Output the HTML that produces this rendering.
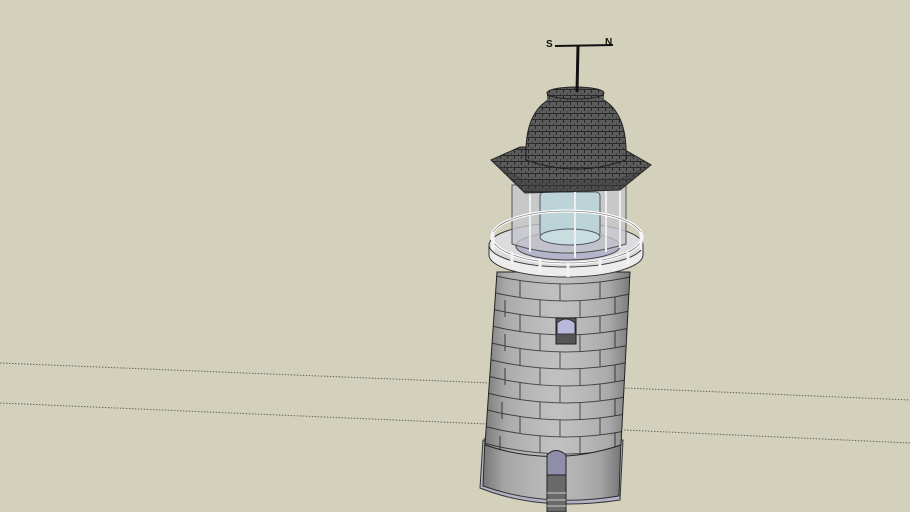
<!DOCTYPE html>
<html><head><meta charset="utf-8"><style>
html,body{margin:0;padding:0;background:#d3d1bb;}
svg{display:block}
</style></head><body>
<svg width="910" height="512" viewBox="0 0 910 512" xmlns="http://www.w3.org/2000/svg">
<defs>
<pattern id="shingle" width="7" height="6" patternUnits="userSpaceOnUse">
<rect width="7" height="6" fill="#5c5c5c"/>
<path d="M0 5.5H7M3.5 0V3M0 3V5.5" stroke="#2a2a2a" stroke-width="1.1"/>
</pattern>
<linearGradient id="shade" x1="0" x2="1">
<stop offset="0" stop-color="#000" stop-opacity="0.35"/>
<stop offset="0.15" stop-color="#000" stop-opacity="0.1"/>
<stop offset="0.5" stop-color="#fff" stop-opacity="0.05"/>
<stop offset="0.85" stop-color="#000" stop-opacity="0.1"/>
<stop offset="1" stop-color="#000" stop-opacity="0.35"/>
</linearGradient>
<clipPath id="tw"><path d="M497 272 L485 445 Q552 468 621 445 L630 272 Z"/></clipPath>
</defs>
<path d="M0 363L491 383M625 388L910 400M0 403L487 424M624 430L910 443" stroke="#666" stroke-width="1" stroke-dasharray="1.5 1.5" fill="none"/>
<!-- base -->
<path d="M483 440 L480 488 Q540 512 620 500 L623 440 Z" fill="#b2b2c4" stroke="#333"/>
<path d="M485 438 L483 486 Q545 508 619 496 L621 438 Z" fill="#b6b6b6" stroke="#333"/>
<path d="M485 438 L483 486 Q545 508 619 496 L621 438 Z" fill="url(#shade)"/>
<!-- tower body -->
<path d="M497 272 L485 445 Q552 468 621 445 L630 272 Z" fill="#bdbdbd"/>
<g clip-path="url(#tw)" stroke="#444" stroke-width="1" fill="none">
<path d="M480 272Q566 296 650 272M480 289Q566 313 650 289M480 306Q566 330 650 306M480 323Q566 347 650 323M480 340Q566 364 650 340M480 357Q566 381 650 357M480 374Q566 398 650 374M480 391Q566 415 650 391M480 408Q566 432 650 408M480 425Q566 449 650 425M480 442Q566 466 650 442"/>
<path d="M520 280v17M560 284v17M600 282v17M540 300v17M580 301v17M615 297v17M520 314v17M560 318v17M600 316v17M540 334v17M580 335v17M615 331v17M520 348v17M560 352v17M600 350v17M540 368v17M580 369v17M615 365v17M520 382v17M560 386v17M600 384v17M540 402v17M580 403v17M615 399v17M520 416v17M560 420v17M600 418v17M540 436v17M580 437v17M615 433v17M505 300v17M505 334v17M505 368v17M502 402v17M500 436v17"/>
</g>
<path d="M497 272 L485 445 Q552 468 621 445 L630 272 Z" fill="url(#shade)" stroke="#222"/>
<!-- upper window -->
<rect x="556" y="318" width="20" height="26" fill="#555" stroke="#222"/>
<path d="M557 334 V323 Q566 315 575 323 V334 Z" fill="#b8b8dc" stroke="#333"/>
<!-- door -->
<path d="M547 512 V455 Q556 446 566 455 V512 Z" fill="#8e8ea8" stroke="#222"/>
<rect x="547" y="475" width="19" height="37" fill="#6a6a6a" stroke="#222"/>
<path d="M547 493H566M547 500H566M547 506H566" stroke="#ccc"/>
<!-- gallery deck band -->
<path d="M489 245 V255 A77 22 0 0 0 643 255 V245 Z" fill="#ececec" stroke="#333"/>
<ellipse cx="566" cy="245" rx="77" ry="22" fill="#dcdcdf" stroke="#333"/>
<ellipse cx="568" cy="246" rx="52" ry="14" fill="#b4b4cc" stroke="#444"/>
<!-- lantern glass -->
<path d="M512 185 L512 244 Q566 262 626 244 L626 185 Z" fill="#c4c6cc" fill-opacity="0.8" stroke="#555"/>
<rect x="540" y="192" width="60" height="45" rx="4" fill="#bcd3d8" stroke="#556"/>
<ellipse cx="570" cy="237" rx="30" ry="8" fill="#c8dde0" stroke="#556"/>
<path d="M530 190V252M575 190V258M606 188V252M620 188V248" stroke="#eee" stroke-width="2"/>
<!-- railing -->
<ellipse cx="567" cy="237" rx="75" ry="26" fill="none" stroke="#fff" stroke-width="3"/>
<ellipse cx="567" cy="237" rx="75" ry="26" fill="none" stroke="#555" stroke-width="0.6"/>
<path d="M493 232V250M512 252V264M540 259V272M568 263V277M600 259V272M628 252V264M641 232V250" stroke="#f4f4f4" stroke-width="3"/>
<!-- roof hexagon -->
<path d="M491 160 L520 147 L620 147 L651 165 L620 190 L525 193 Z" fill="url(#shingle)" stroke="#222"/>
<path d="M491 160 L525 180 L620 178 L651 165 L620 190 L525 193 Z" fill="#3a3a3a" fill-opacity="0.45"/>
<!-- dome -->
<path d="M526 160 Q524 115 548 100 L604 100 Q628 115 626 160 Q576 178 526 160 Z" fill="url(#shingle)" stroke="#222"/>
<rect x="547" y="93" width="57" height="12" fill="url(#shingle)"/>
<ellipse cx="575.5" cy="93" rx="28.5" ry="6" fill="url(#shingle)" stroke="#222"/>
<path d="M577 92 L578 46" stroke="#111" stroke-width="3"/>
<path d="M555 46 L613 45" stroke="#111" stroke-width="2"/>
<text x="546" y="47" font-family="Liberation Sans, sans-serif" font-size="10" font-weight="bold" fill="#111">S</text>
<text x="605" y="45" font-family="Liberation Sans, sans-serif" font-size="10" font-weight="bold" fill="#111">N</text>
</svg>
</body></html>
